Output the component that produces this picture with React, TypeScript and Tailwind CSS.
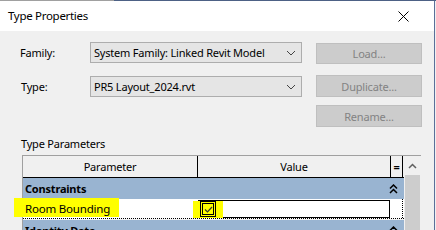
import React from 'react';

const Chevron = () => (
    <svg width="10" height="6" viewBox="0 0 10 6" className="block">
        <polyline points="1,1 5,5 9,1" fill="none" stroke="#444" strokeWidth="1" />
    </svg>
);

const Collapse = () => (
    <svg width="9" height="10" viewBox="0 0 9 10" className="block">
        <polyline points="1,4.5 4.5,1 8,4.5" fill="none" stroke="#000" strokeWidth="1.5" />
        <polyline points="1,9 4.5,5.5 8,9" fill="none" stroke="#000" strokeWidth="1.5" />
    </svg>
);

const Combo = ({ value }: { value: string }) => (
    <div className="w-[212px] h-[21px] bg-[#e5e5e5] border border-[#adadad] flex items-center justify-between pl-[3px] pr-[5px]">
        <span className="whitespace-nowrap text-black">{value}</span>
        <Chevron />
    </div>
);

const Btn = ({ label, h = 'h-[21px]' }: { label: string; h?: string }) => (
    <div className={`w-[106px] ${h} bg-[#cccccc] border border-[#bfbfbf] flex items-center justify-center text-[#838383]`}>
        {label}
    </div>
);

export default function App() {
    return (
        <div className="w-[436px] h-[230px] overflow-hidden bg-[#f0f0f0] text-[11px] tracking-[-0.2px] leading-none text-black whitespace-nowrap [font-family:'Segoe_UI','Noto_Sans',sans-serif]">
            {/* top edge */}
            <div className="flex h-px">
                <div className="w-[114px] bg-[#a0a0a0]" />
                <div className="flex-1 bg-[#4d6185]" />
            </div>

            <div className="w-[435px] h-[229px] border-r border-[#5a6f99]">
                {/* Title bar */}
                <div className="h-[30px] bg-white flex items-center justify-between pl-[8px] pr-[25px]">
                    <span className="text-[11.5px] tracking-[-0.3px]">Type Properties</span>
                    <svg width="11" height="11" viewBox="0 0 11 11">
                        <path d="M0.5 0.5 L10.5 10.5 M10.5 0.5 L0.5 10.5" stroke="#000" strokeWidth="1" />
                    </svg>
                </div>

                {/* Body */}
                <div className="pt-[11px]">
                    <div className="flex items-start">
                        <div className="w-[90px] pl-[20px] h-[21px] flex items-center">Family:</div>
                        <Combo value="System Family: Linked Revit Model" />
                        <div className="ml-[14px] mt-px">
                            <Btn label="Load..." />
                        </div>
                    </div>

                    <div className="flex items-start mt-[11px]">
                        <div className="w-[90px] pl-[21px] h-[21px] flex items-center mt-px">Type:</div>
                        <div className="mt-px">
                            <Combo value="PR5 Layout_2024.rvt" />
                        </div>
                        <div className="ml-[14px]">
                            <Btn label="Duplicate..." h="h-[22px]" />
                        </div>
                    </div>

                    <div className="flex mt-[8px] pl-[316px]">
                        <Btn label="Rename..." h="h-[22px]" />
                    </div>

                    <div className="pl-[21px] mt-[9px] h-[14px] flex items-center">Type Parameters</div>

                    {/* Grid */}
                    <div className="ml-[22px] mt-[5px] w-[399px] border-t border-l border-[#a0a0a0] flex">
                        <div className="w-[381px]">
                            {/* header */}
                            <div className="h-[22px] flex border-b border-black">
                                <div className="w-[175px] flex items-center justify-center border-r border-black">Parameter</div>
                                <div className="w-[193px] flex items-center justify-center border-r border-black">Value</div>
                                <div className="w-[12px] flex items-center justify-center border-r border-black font-bold">
                                    <span className="text-black">=</span>
                                </div>
                            </div>
                            {/* Constraints */}
                            <div className="h-[21px] bg-[#99b4d1] flex items-center justify-between pl-[2px] pr-[6px]">
                                <span className="font-bold">Constraints</span>
                                <Collapse />
                            </div>
                            {/* Room Bounding */}
                            <div className="h-[20px] bg-white flex border-b border-dotted border-black">
                                <div className="w-[175px] flex items-center pl-[2px] relative">
                                    <div className="absolute left-[-9px] top-[-1px] w-[105px] h-[19px] bg-[#ffff00]" />
                                    <span className="relative text-[11.5px]">Room Bounding</span>
                                </div>
                                <div className="w-[192px] mt-px h-[18px] border border-black relative">
                                    <div className="absolute left-[-6px] top-0 w-[30px] h-[17px] bg-[#ffff00]" />
                                    <div className="absolute left-[1px] top-0 w-[16px] h-[16px] border border-black bg-[#ffff00] flex items-center justify-center">
                                        <div className="w-[12px] h-[12px] border border-black flex items-center justify-center">
                                            <svg width="9" height="7" viewBox="0 0 9 7">
                                                <polyline points="1,3.5 3.5,6 8,1" fill="none" stroke="#333" strokeWidth="1.2" />
                                            </svg>
                                        </div>
                                    </div>
                                </div>
                                <div className="w-[13px] border-r border-dotted border-black" />
                            </div>
                            {/* Identity Data */}
                            <div className="h-[21px] mt-px bg-[#99b4d1] flex items-center justify-between pl-[2px] pr-[6px]">
                                <span className="font-bold">Identity Data</span>
                                <Collapse />
                            </div>
                        </div>
                        {/* scrollbar */}
                        <div className="w-[17px] bg-[#f0f0f0] flex flex-col">
                            <div className="h-[19px] flex items-center justify-center">
                                <svg width="9" height="6" viewBox="0 0 9 6">
                                    <polyline points="1,5 4.5,1.5 8,5" fill="none" stroke="#606060" strokeWidth="1.5" />
                                </svg>
                            </div>
                            <div className="flex-1 bg-[#cdcdcd] mx-px" />
                        </div>
                    </div>
                </div>
            </div>
        </div>
    );
}
